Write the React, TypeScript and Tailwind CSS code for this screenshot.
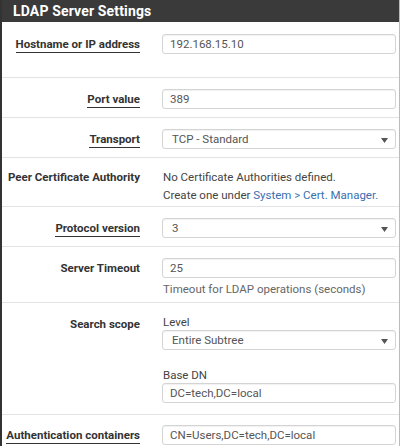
import React from "react";

const Caret = () => (
  <svg width="7" height="5" viewBox="0 0 7 5" className="absolute right-[7px] top-[8px]">
    <path d="M0 0 L7 0 L3.5 5 Z" fill="#555" />
  </svg>
);

const Input = ({ value }: { value: string }) => (
  <div className="h-[20px] w-full rounded-[3px] border border-[#d4d4d4] bg-white pl-[7px] text-[11.5px] leading-[18px] text-[#555] shadow-[inset_0_1px_1px_rgba(0,0,0,0.06)]">
    {value}
  </div>
);

const Select = ({ value }: { value: string }) => (
  <div className="relative h-[20px] w-full rounded-[3px] border border-[#d4d4d4] bg-white pl-[9px] text-[11.5px] leading-[18px] text-[#555] shadow-[inset_0_1px_1px_rgba(0,0,0,0.06)]">
    {value}
    <Caret />
  </div>
);

const Label = ({ text, req }: { text: string; req?: boolean }) => (
  <div className="w-[138px] shrink-0 whitespace-nowrap text-right text-[11.5px] font-bold leading-[14px] text-[#333]">
    {req ? (
      <span className="border-b border-[#333] pb-[1px]">{text}</span>
    ) : (
      <span>{text}</span>
    )}
  </div>
);

export default function App() {
  return (
    <div
      className="h-[446px] w-[400px] overflow-hidden border-l-2 border-r border-l-[#333] border-r-[#bbb] bg-white"
      style={{ fontFamily: "Roboto, 'Liberation Sans', sans-serif" }}
    >
      <div className="flex h-[22px] items-center bg-[#3a3a3a] pl-[11px] text-[14px] font-bold tracking-[0.15px] text-white">
        LDAP Server Settings
      </div>

      {/* Hostname */}
      <div className="flex h-[56px] border-b border-[#e3e3e3] pt-[15px]">
        <Label text="Hostname or IP address" req />
        <div className="ml-[22px] mr-[3px] -mt-[3px] flex-1">
          <Input value="192.168.15.10" />
        </div>
      </div>

      {/* Port */}
      <div className="flex h-[40px] border-b border-[#e3e3e3] pt-[14px]">
        <Label text="Port value" req />
        <div className="ml-[22px] mr-[3px] -mt-[3px] flex-1">
          <Input value="389" />
        </div>
      </div>

      {/* Transport */}
      <div className="flex h-[40px] border-b border-[#e3e3e3] pt-[14px]">
        <Label text="Transport" req />
        <div className="ml-[22px] mr-[3px] -mt-[3px] flex-1">
          <Select value="TCP - Standard" />
        </div>
      </div>

      {/* Peer CA */}
      <div className="flex h-[49px] border-b border-[#e3e3e3] pt-[12px]">
        <Label text="Peer Certificate Authority" />
        <div className="ml-[23px] flex-1 text-[11.5px] leading-[18px] text-[#444]">
          <div className="-mt-[2px]">No Certificate Authorities defined.</div>
          <div>
            Create one under <span className="text-[#3a6fb0]">System &gt; Cert. Manager.</span>
          </div>
        </div>
      </div>

      {/* Protocol */}
      <div className="flex h-[40px] border-b border-[#e3e3e3] pt-[14px]">
        <Label text="Protocol version" req />
        <div className="ml-[22px] mr-[3px] -mt-[3px] flex-1">
          <Select value="3" />
        </div>
      </div>

      {/* Timeout */}
      <div className="flex h-[56px] border-b border-[#e3e3e3] pt-[14px]">
        <Label text="Server Timeout" />
        <div className="ml-[22px] mr-[3px] -mt-[3px] flex-1">
          <Input value="25" />
          <div className="mt-[3px] pl-[1px] text-[11.5px] leading-[16px] text-[#666]">
            Timeout for LDAP operations (seconds)
          </div>
        </div>
      </div>

      {/* Search scope */}
      <div className="flex h-[112px] border-b border-[#e3e3e3] pt-[14px]">
        <Label text="Search scope" />
        <div className="ml-[22px] mr-[3px] flex-1">
          <div className="-mt-[2px] pl-[1px] text-[11.5px] leading-[15px] text-[#444]">Level</div>
          <Select value="Entire Subtree" />
          <div className="mt-[18px] pl-[1px] text-[11.5px] leading-[15px] text-[#444]">Base DN</div>
          <Input value="DC=tech,DC=local" />
        </div>
      </div>

      {/* Auth containers */}
      <div className="flex h-[40px] pt-[13px]">
        <Label text="Authentication containers" req />
        <div className="ml-[22px] mr-[3px] -mt-[3px] flex-1">
          <Input value="CN=Users,DC=tech,DC=local" />
        </div>
      </div>
    </div>
  );
}
